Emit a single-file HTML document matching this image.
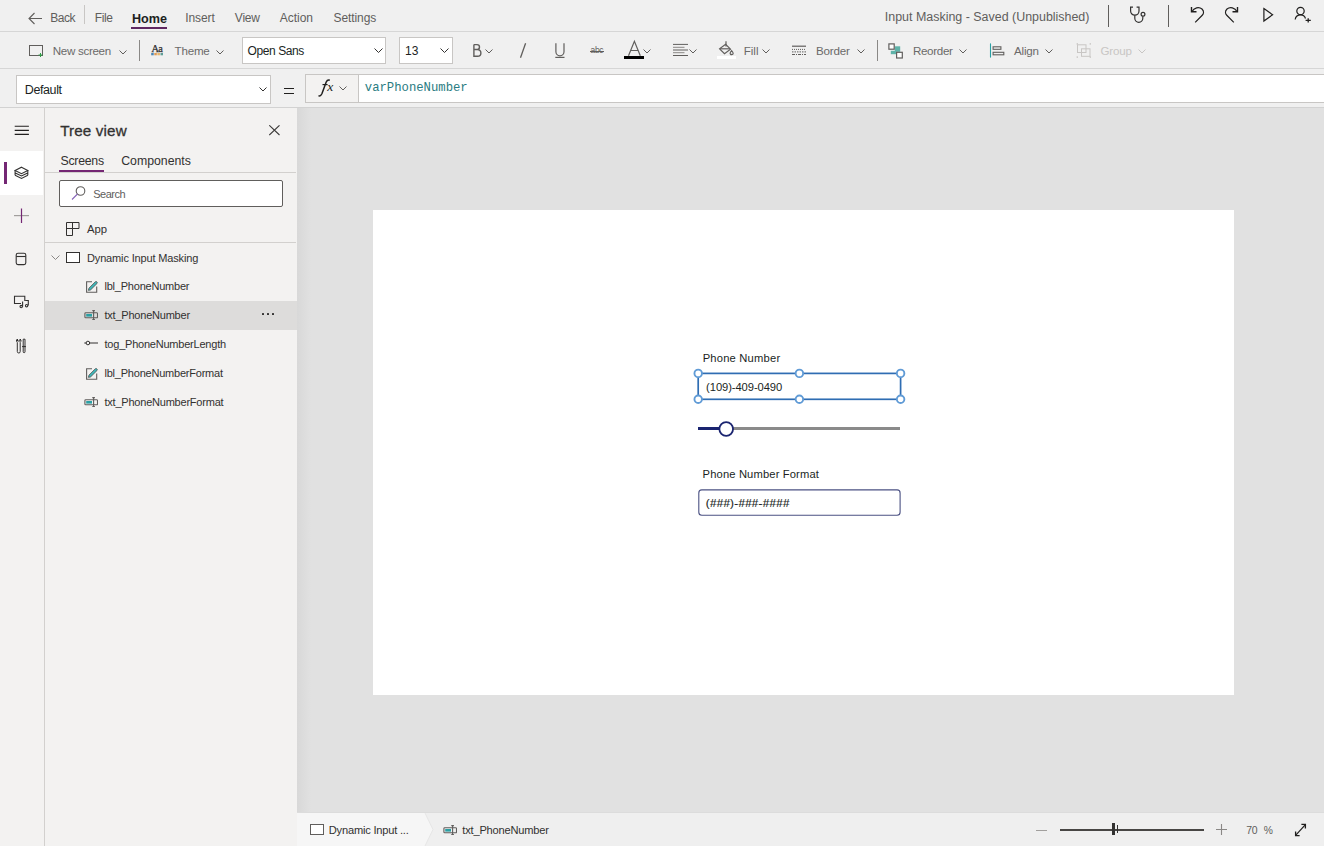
<!DOCTYPE html>
<html><head><meta charset="utf-8"><style>
html,body{margin:0;padding:0;width:1324px;height:846px;overflow:hidden;position:relative;font-family:"Liberation Sans",sans-serif}
.t{position:absolute;white-space:nowrap;line-height:1.117;}
</style></head><body>
<div style="position:absolute;left:0px;top:0px;width:1324px;height:846px;background:#f3f2f1"></div>
<div style="position:absolute;left:0px;top:0px;width:1324px;height:107px;background:#f0f0f0"></div>
<div style="position:absolute;left:0px;top:31px;width:1324px;height:1px;background:#d6d6d6"></div>
<div style="position:absolute;left:0px;top:68px;width:1324px;height:1px;background:#d6d6d6"></div>
<div style="position:absolute;left:0px;top:107px;width:1324px;height:1px;background:#d2d2d2"></div>
<div style="position:absolute;left:44px;top:108px;width:1px;height:738px;background:#d2d0ce"></div>
<div style="position:absolute;left:297px;top:108px;width:1027px;height:704px;background:#e1e1e1"></div>
<div style="position:absolute;left:297px;top:108px;width:14px;height:704px;background:linear-gradient(to right,#d8d8d8,#e1e1e1)"></div>
<div style="position:absolute;left:297px;top:812px;width:1027px;height:34px;background:#efefef"></div>
<div style="position:absolute;left:297px;top:812px;width:1027px;height:1px;background:#dcdcdc"></div>
<svg style="position:absolute;left:28px;top:12px" width="15" height="13" viewBox="0 0 15 13" fill="none"><path d="M1 6.5 H14 M6.5 1 L1 6.5 L6.5 12" stroke="#605e5c" stroke-width="1.1"/></svg>
<div class="t" style="left:50.3px;top:12.34px;font-size:12px;color:#605e5c;font-weight:400;font-family:'Liberation Sans';letter-spacing:-0.45px;">Back</div>
<div style="position:absolute;left:84px;top:5px;width:1px;height:19px;background:#c8c6c4"></div>
<div class="t" style="left:94.8px;top:12.34px;font-size:12px;color:#605e5c;font-weight:400;font-family:'Liberation Sans';letter-spacing:-0.4px;">File</div>
<div class="t" style="left:132px;top:12.20px;font-size:12.6px;color:#201f1e;font-weight:700;font-family:'Liberation Sans';letter-spacing:0px;">Home</div>
<div style="position:absolute;left:131px;top:27px;width:36px;height:2px;background:#5e2760"></div>
<div class="t" style="left:185.3px;top:12.34px;font-size:12px;color:#605e5c;font-weight:400;font-family:'Liberation Sans';letter-spacing:-0.1px;">Insert</div>
<div class="t" style="left:234.8px;top:12.34px;font-size:12px;color:#605e5c;font-weight:400;font-family:'Liberation Sans';letter-spacing:-0.2px;">View</div>
<div class="t" style="left:279.7px;top:12.34px;font-size:12px;color:#605e5c;font-weight:400;font-family:'Liberation Sans';letter-spacing:0px;">Action</div>
<div class="t" style="left:333.6px;top:12.34px;font-size:12px;color:#605e5c;font-weight:400;font-family:'Liberation Sans';letter-spacing:-0.1px;">Settings</div>
<div class="t" style="left:884.8px;top:10.73px;font-size:12.45px;color:#605e5c;font-weight:400;font-family:'Liberation Sans';letter-spacing:0px;">Input Masking - Saved (Unpublished)</div>
<div style="position:absolute;left:1108px;top:5px;width:1px;height:22px;background:#605e5c"></div>
<div style="position:absolute;left:1168px;top:5px;width:1px;height:22px;background:#605e5c"></div>
<svg style="position:absolute;left:1125px;top:4px" width="25" height="22" viewBox="0 0 25 22" fill="none"><path d="M8 3.2 H5.6 V7 a4.2 4.2 0 0 0 8.4 0 V3.2 H11.6" stroke="#323130" stroke-width="1.2"/><path d="M9.8 11.2 V14.3 a4 4 0 0 0 8 0 V12.2" stroke="#323130" stroke-width="1.2"/><circle cx="18" cy="10.2" r="1.9" stroke="#323130" stroke-width="1.2"/></svg>
<svg style="position:absolute;left:1186px;top:4px" width="22" height="22" viewBox="0 0 22 22" fill="none"><path d="M5.5 3 V7.7 H10.5" stroke="#201f1e" stroke-width="1.4"/><path d="M6 7.5 C8 3.5 13 2.5 16 5 C18.5 7.5 17.5 10 16 11.5 L9.2 18.3" stroke="#201f1e" stroke-width="1.2"/></svg>
<svg style="position:absolute;left:1221px;top:4px" width="22" height="22" viewBox="0 0 22 22" fill="none"><g transform="translate(22,0) scale(-1,1)"><path d="M5.5 3 V7.7 H10.5" stroke="#201f1e" stroke-width="1.4"/><path d="M6 7.5 C8 3.5 13 2.5 16 5 C18.5 7.5 17.5 10 16 11.5 L9.2 18.3" stroke="#201f1e" stroke-width="1.2"/></g></svg>
<svg style="position:absolute;left:1258px;top:4px" width="22" height="22" viewBox="0 0 22 22" fill="none"><path d="M5.9 4.6 L14.6 10.7 L5.9 17 Z" stroke="#201f1e" stroke-width="1.2" stroke-linejoin="miter"/></svg>
<svg style="position:absolute;left:1290px;top:4px" width="24" height="22" viewBox="0 0 24 22" fill="none"><circle cx="10.5" cy="7" r="3.7" stroke="#201f1e" stroke-width="1.2"/><path d="M5.2 15.5 a5.3 5.3 0 0 1 10.3 -1" stroke="#201f1e" stroke-width="1.2"/><path d="M18.2 14.3 V18.6 M15.6 16.4 H20.8" stroke="#201f1e" stroke-width="1.3"/></svg>
<svg style="position:absolute;left:29px;top:45px" width="15" height="12" viewBox="0 0 15 12" fill="none"><rect x="0.5" y="0.5" width="13" height="10" stroke="#605e5c" stroke-width="1"/><path d="M11.5 8 V12 M9.5 10 H13.5" stroke="#2e9e47" stroke-width="1"/></svg>
<div class="t" style="left:52.7px;top:44.50px;font-size:11.6px;color:#6b6a69;font-weight:400;font-family:'Liberation Sans';letter-spacing:-0.3px;">New screen</div>
<svg style="position:absolute;left:118.5px;top:49.5px" width="8" height="5" viewBox="0 0 8 5" fill="none"><path d="M0.5 0.5 L4.0 4.0 L7.5 0.5" stroke="#605e5c" stroke-width="1"/></svg>
<div style="position:absolute;left:139px;top:40px;width:1px;height:21px;background:#8a8886"></div>
<div class="t" style="left:151.4px;top:42.58px;font-size:10.3px;color:#323130;font-weight:400;font-family:'Liberation Serif';letter-spacing:-0.5px;-webkit-text-stroke:0.25px #323130">Aa</div>
<svg style="position:absolute;left:151px;top:53.4px" width="13" height="3" viewBox="0 0 13 3" fill="none"><rect x="0.2" y="0" width="2.5" height="2.3" fill="#4a86b5"/><rect x="3.3" y="0" width="2.5" height="2.3" fill="#e09a55"/><rect x="6.4" y="0" width="2.5" height="2.3" fill="#e8b56a"/><rect x="9.5" y="0" width="2.5" height="2.3" fill="#5f9e96"/></svg>
<div class="t" style="left:174.5px;top:44.50px;font-size:11.6px;color:#6b6a69;font-weight:400;font-family:'Liberation Sans';letter-spacing:-0.2px;">Theme</div>
<svg style="position:absolute;left:215.5px;top:49.5px" width="8" height="5" viewBox="0 0 8 5" fill="none"><path d="M0.5 0.5 L4.0 4.0 L7.5 0.5" stroke="#605e5c" stroke-width="1"/></svg>
<div style="position:absolute;left:242px;top:37px;width:144px;height:27px;background:#fff;border:1px solid #c8c6c4;box-sizing:border-box"></div>
<div class="t" style="left:247.5px;top:45.14px;font-size:12px;color:#201f1e;font-weight:400;font-family:'Liberation Sans';letter-spacing:-0.4px;">Open Sans</div>
<svg style="position:absolute;left:374px;top:48px" width="9" height="5" viewBox="0 0 9 5" fill="none"><path d="M0.5 0.5 L4.5 4.5 L8.5 0.5" stroke="#323130" stroke-width="1"/></svg>
<div style="position:absolute;left:399px;top:37px;width:54px;height:27px;background:#fff;border:1px solid #c8c6c4;box-sizing:border-box"></div>
<div class="t" style="left:405px;top:45.14px;font-size:12px;color:#201f1e;font-weight:400;font-family:'Liberation Sans';letter-spacing:0px;">13</div>
<svg style="position:absolute;left:440px;top:48px" width="9" height="5" viewBox="0 0 9 5" fill="none"><path d="M0.5 0.5 L4.5 4.5 L8.5 0.5" stroke="#323130" stroke-width="1"/></svg>
<svg style="position:absolute;left:468px;top:38px" width="30" height="22" viewBox="0 0 30 22" fill="none"><path d="M5.9 6.6 V18.3 H9.5 a3.4 3.4 0 0 0 0 -6.8 H5.9 M5.9 11.6 H9 a2.5 2.5 0 0 0 0 -5 H5.9" stroke="#605e5c" stroke-width="1.4"/></svg>
<svg style="position:absolute;left:484.5px;top:49px" width="8" height="5" viewBox="0 0 8 5" fill="none"><path d="M0.5 0.5 L4.0 4.0 L7.5 0.5" stroke="#605e5c" stroke-width="1"/></svg>
<svg style="position:absolute;left:515px;top:38px" width="15" height="22" viewBox="0 0 15 22" fill="none"><path d="M10.6 5.2 L5.5 19.7" stroke="#605e5c" stroke-width="1.3"/></svg>
<svg style="position:absolute;left:550px;top:38px" width="20" height="22" viewBox="0 0 20 22" fill="none"><path d="M5.9 5.2 V13.8 a4.05 4.05 0 0 0 8.1 0 V5.2" stroke="#605e5c" stroke-width="1.2"/><path d="M5.3 19.4 H14.5" stroke="#605e5c" stroke-width="1.2"/></svg>
<div class="t" style="left:590.5px;top:45.81px;font-size:8.5px;color:#605e5c;font-weight:400;font-family:'Liberation Sans';letter-spacing:-0.3px;">abc</div>
<div style="position:absolute;left:590px;top:50.5px;width:14px;height:1px;background:#605e5c"></div>
<svg style="position:absolute;left:618px;top:36px" width="30" height="24" viewBox="0 0 30 24" fill="none"><path d="M10.5 19.8 L16.4 5.3 L22.3 19.8 M12.4 14.5 H20.4" stroke="#605e5c" stroke-width="1.2"/></svg>
<div style="position:absolute;left:624px;top:56px;width:20px;height:3px;background:#000"></div>
<svg style="position:absolute;left:642.5px;top:49px" width="8" height="5" viewBox="0 0 8 5" fill="none"><path d="M0.5 0.5 L4.0 4.0 L7.5 0.5" stroke="#605e5c" stroke-width="1"/></svg>
<svg style="position:absolute;left:673px;top:43px" width="16" height="14" viewBox="0 0 16 14" fill="none"><path d="M0 1.4 H15 M0 7 H15 M0 12.5 H15" stroke="#605e5c" stroke-width="1"/><path d="M0 4.3 H11.5 M0 9.7 H11.5" stroke="#8a8886" stroke-width="1"/></svg>
<svg style="position:absolute;left:689px;top:49.3px" width="8" height="5" viewBox="0 0 8 5" fill="none"><path d="M0.5 0.5 L4.0 4.0 L7.5 0.5" stroke="#605e5c" stroke-width="1"/></svg>
<svg style="position:absolute;left:716px;top:38px" width="22" height="18" viewBox="0 0 22 18" fill="none"><path d="M10 3.3 V8.5" stroke="#605e5c" stroke-width="1.2"/><path d="M3.6 10.8 L8.5 15.7 L14.5 11.2 L9.6 6.3 Z" stroke="#605e5c" stroke-width="1.2"/><path d="M4 10.8 H14" stroke="#605e5c" stroke-width="1.2"/><path d="M15.6 12.6 Q17.7 15 17 16 Q15.6 17.3 14.3 16 Q13.5 15 15.6 12.6Z" stroke="#605e5c" stroke-width="1.1"/></svg>
<div style="position:absolute;left:717px;top:56px;width:19px;height:3px;background:#fff"></div>
<div class="t" style="left:743.7px;top:44.50px;font-size:11.6px;color:#6b6a69;font-weight:400;font-family:'Liberation Sans';letter-spacing:0px;">Fill</div>
<svg style="position:absolute;left:761.5px;top:49.2px" width="8" height="5" viewBox="0 0 8 5" fill="none"><path d="M0.5 0.5 L4.0 4.0 L7.5 0.5" stroke="#605e5c" stroke-width="1"/></svg>
<svg style="position:absolute;left:792px;top:44px" width="14" height="12" viewBox="0 0 14 12" fill="none"><path d="M0 2.2 H14" stroke="#605e5c" stroke-width="1.2"/><path d="M0 5.4 H14" stroke="#605e5c" stroke-width="1" stroke-dasharray="1 1"/><path d="M0 7.9 H14" stroke="#605e5c" stroke-width="1" stroke-dasharray="1.5 1"/><path d="M0 10.5 H14" stroke="#605e5c" stroke-width="1.2" stroke-dasharray="3 1 1 1"/></svg>
<div class="t" style="left:816px;top:44.50px;font-size:11.6px;color:#6b6a69;font-weight:400;font-family:'Liberation Sans';letter-spacing:-0.2px;">Border</div>
<svg style="position:absolute;left:857px;top:49.2px" width="8" height="5" viewBox="0 0 8 5" fill="none"><path d="M0.5 0.5 L4.0 4.0 L7.5 0.5" stroke="#605e5c" stroke-width="1"/></svg>
<div style="position:absolute;left:877px;top:40px;width:1px;height:21px;background:#8a8886"></div>
<svg style="position:absolute;left:882px;top:38px" width="24" height="22" viewBox="0 0 24 22" fill="none"><rect x="12.8" y="8.3" width="5.4" height="5.5" fill="#5fb3a9"/><rect x="8.8" y="12.8" width="5.4" height="3.4" fill="#5fb3a9"/><rect x="6.9" y="5.9" width="5.3" height="5.3" fill="#fff" stroke="#605e5c" stroke-width="1.2"/><rect x="14.6" y="14.3" width="5.7" height="5.7" fill="#fff" stroke="#605e5c" stroke-width="1.2"/></svg>
<div class="t" style="left:912.9px;top:44.50px;font-size:11.6px;color:#6b6a69;font-weight:400;font-family:'Liberation Sans';letter-spacing:-0.3px;">Reorder</div>
<svg style="position:absolute;left:958.5px;top:49.2px" width="8" height="5" viewBox="0 0 8 5" fill="none"><path d="M0.5 0.5 L4.0 4.0 L7.5 0.5" stroke="#605e5c" stroke-width="1"/></svg>
<svg style="position:absolute;left:988px;top:42px" width="18" height="18" viewBox="0 0 18 18" fill="none"><path d="M2.5 1.4 V15.6" stroke="#2aa0a4" stroke-width="1.1"/><rect x="5.1" y="4.8" width="7.8" height="2.5" stroke="#605e5c" stroke-width="1.1"/><rect x="5.1" y="10.3" width="10.7" height="2.5" stroke="#605e5c" stroke-width="1.1"/></svg>
<div class="t" style="left:1014px;top:44.50px;font-size:11.6px;color:#6b6a69;font-weight:400;font-family:'Liberation Sans';letter-spacing:-0.2px;">Align</div>
<svg style="position:absolute;left:1045px;top:49.2px" width="8" height="5" viewBox="0 0 8 5" fill="none"><path d="M0.5 0.5 L4.0 4.0 L7.5 0.5" stroke="#605e5c" stroke-width="1"/></svg>
<svg style="position:absolute;left:1074px;top:42px" width="20" height="18" viewBox="0 0 20 18" fill="none"><rect x="2.6" y="1.2" width="1.4" height="1.4" fill="#c8c6c4"/><rect x="15.6" y="1.2" width="1.4" height="1.4" fill="#c8c6c4"/><rect x="2.6" y="14.4" width="1.4" height="1.4" fill="#c8c6c4"/><rect x="15.6" y="14.4" width="1.4" height="1.4" fill="#c8c6c4"/><rect x="3.5" y="2.8" width="8.5" height="7.7" stroke="#c8c6c4" stroke-width="1"/><rect x="7.5" y="6.8" width="8.5" height="7.5" stroke="#c8c6c4" stroke-width="1"/></svg>
<div class="t" style="left:1100.5px;top:44.50px;font-size:11.6px;color:#c8c6c4;font-weight:400;font-family:'Liberation Sans';letter-spacing:-0.2px;">Group</div>
<svg style="position:absolute;left:1138px;top:49.2px" width="8" height="5" viewBox="0 0 8 5" fill="none"><path d="M0.5 0.5 L4.0 4.0 L7.5 0.5" stroke="#c8c6c4" stroke-width="1"/></svg>
<div style="position:absolute;left:16px;top:75px;width:255px;height:29px;background:#fff;border:1px solid #c8c6c4;box-sizing:border-box"></div>
<div class="t" style="left:24.8px;top:83.79px;font-size:12.5px;color:#201f1e;font-weight:400;font-family:'Liberation Sans';letter-spacing:-0.4px;">Default</div>
<svg style="position:absolute;left:259px;top:86.5px" width="8" height="5" viewBox="0 0 8 5" fill="none"><path d="M0.5 0.5 L4.0 4.0 L7.5 0.5" stroke="#323130" stroke-width="1"/></svg>
<div style="position:absolute;left:284px;top:88px;width:10px;height:1.3px;background:#201f1e"></div>
<div style="position:absolute;left:284px;top:93px;width:10px;height:1.3px;background:#201f1e"></div>
<div style="position:absolute;left:305px;top:74px;width:1028px;height:29px;background:#fff;border:1px solid #c8c6c4;box-sizing:border-box"></div>
<div style="position:absolute;left:306px;top:75px;width:53px;height:27px;background:#f3f2f1;border-right:1px solid #c8c6c4;box-sizing:border-box"></div>
<svg style="position:absolute;left:314px;top:76px" width="20" height="24" viewBox="0 0 20 24" fill="none"><path d="M4.5 19.6 Q6.5 20.8 8 17.5 L12.2 6 Q13.5 3.3 15.8 4.3" stroke="#201f1e" stroke-width="1.5"/><path d="M8.5 8.6 H13.6" stroke="#201f1e" stroke-width="1.2"/></svg>
<div class="t" style="left:327.3px;top:78.98px;font-size:13.5px;color:#201f1e;font-weight:400;font-family:'Liberation Serif';letter-spacing:0px;"><i>x</i></div>
<svg style="position:absolute;left:339px;top:86px" width="8" height="5" viewBox="0 0 8 5" fill="none"><path d="M0.5 0.5 L4.0 4.0 L7.5 0.5" stroke="#605e5c" stroke-width="1"/></svg>
<div class="t" style="left:364.8px;top:82.41px;font-size:12.25px;color:#2a7c82;font-weight:400;font-family:'Liberation Mono';letter-spacing:0px;">varPhoneNumber</div>
<svg style="position:absolute;left:14px;top:125px" width="15" height="10" viewBox="0 0 15 10" fill="none"><path d="M0.7 1.3 H14.9 M0.7 5.4 H14.9 M0.7 9.4 H14.9" stroke="#201f1e" stroke-width="1.1"/></svg>
<div style="position:absolute;left:0px;top:151px;width:43px;height:44px;background:#fff"></div>
<div style="position:absolute;left:4px;top:162px;width:3px;height:22px;background:#742774"></div>
<svg style="position:absolute;left:13px;top:165px" width="16" height="16" viewBox="0 0 16 16" fill="none"><path d="M8.5 2.2 L14.8 5.5 L8.5 8.7 L2.1 5.5 Z" stroke="#323130" stroke-width="1.1"/><path d="M2.3 7.9 L8.5 11 L14.6 7.9 M2.1 10.3 L8.5 13.5 L14.8 10.3 M2.1 5.5 V10.3 M14.8 5.5 V10.3" stroke="#323130" stroke-width="1.1"/></svg>
<svg style="position:absolute;left:14px;top:208px" width="16" height="16" viewBox="0 0 16 16" fill="none"><path d="M0 7.6 H15" stroke="#a19f9d" stroke-width="1.2"/><path d="M7.5 0.5 V15" stroke="#742774" stroke-width="1.2"/></svg>
<svg style="position:absolute;left:15px;top:252px" width="12" height="14" viewBox="0 0 12 14" fill="none"><rect x="1.2" y="1.2" width="9.6" height="11.4" rx="1.8" stroke="#323130" stroke-width="1.1"/><path d="M1.2 4.5 H10.8" stroke="#323130" stroke-width="1.1"/></svg>
<svg style="position:absolute;left:13px;top:294px" width="17" height="15" viewBox="0 0 17 15" fill="none"><path d="M8 9.5 H1.5 V2.3 H11.8 V7" stroke="#323130" stroke-width="1.1"/><circle cx="8.2" cy="12.6" r="1.2" stroke="#323130" stroke-width="1.1"/><circle cx="13.6" cy="11.7" r="1.2" stroke="#323130" stroke-width="1.1"/><path d="M9.6 12.4 V7.4 M12.2 6.5 H15.3 V11.5" stroke="#323130" stroke-width="1.1"/></svg>
<svg style="position:absolute;left:15px;top:337px" width="13" height="18" viewBox="0 0 13 18" fill="none"><path d="M3.8 16 a1.5 1.5 0 0 1 -1.5 -1.5 V5.5 Q1.2 4.5 1.5 3 L2.5 2 V4 H5 V2 L6 3 Q6.2 4.5 5.2 5.5 V14.5 a1.4 1.4 0 0 1 -1.4 1.5Z" stroke="#323130" stroke-width="1"/><path d="M8.2 2.2 H10 V9.4 H8.2 Z M7 9.6 H11 M8.2 9.6 V14.8 a0.9 0.9 0 0 0 1.8 0 V9.6" stroke="#323130" stroke-width="1"/></svg>
<div class="t" style="left:60.2px;top:122.94px;font-size:15.2px;color:#323130;font-weight:400;font-family:'Liberation Sans';letter-spacing:0.15px;-webkit-text-stroke:0.3px #323130">Tree view</div>
<svg style="position:absolute;left:269px;top:125px" width="11" height="11" viewBox="0 0 11 11" fill="none"><path d="M0.3 0.3 L10.5 10 M10.5 0.3 L0.3 10" stroke="#3b3a39" stroke-width="1.05"/></svg>
<div class="t" style="left:60.5px;top:155.07px;font-size:12.3px;color:#323130;font-weight:400;font-family:'Liberation Sans';letter-spacing:-0.25px;">Screens</div>
<div style="position:absolute;left:59px;top:170px;width:45px;height:2px;background:#742774"></div>
<div class="t" style="left:121.2px;top:155.07px;font-size:12.3px;color:#323130;font-weight:400;font-family:'Liberation Sans';letter-spacing:0px;">Components</div>
<div style="position:absolute;left:45px;top:172px;width:251px;height:1px;background:#d2d0ce"></div>
<div style="position:absolute;left:59px;top:180px;width:224px;height:27px;background:#fff;border:1px solid #605e5c;border-radius:2px;box-sizing:border-box"></div>
<svg style="position:absolute;left:71px;top:186px" width="15" height="14" viewBox="0 0 15 14" fill="none"><circle cx="9.5" cy="5" r="4.3" stroke="#605e5c" stroke-width="1.1"/><path d="M6.5 8 L1 13.5" stroke="#8764b8" stroke-width="1.1"/></svg>
<div class="t" style="left:93.2px;top:188.04px;font-size:11px;color:#605e5c;font-weight:400;font-family:'Liberation Sans';letter-spacing:-0.5px;">Search</div>
<svg style="position:absolute;left:65.7px;top:221.8px" width="14" height="14" viewBox="0 0 14 14" fill="none"><path d="M0.5 0.5 H13 V6.5 H6.5 V13.5 H0.5 Z M0.5 6.5 H6.5 M6.5 0.5 V6.5" stroke="#323130"/></svg>
<div class="t" style="left:87px;top:222.57px;font-size:11.3px;color:#323130;font-weight:400;font-family:'Liberation Sans';letter-spacing:0px;">App</div>
<div style="position:absolute;left:45px;top:242px;width:251px;height:1px;background:#d2d0ce"></div>
<svg style="position:absolute;left:51px;top:255px" width="9" height="5" viewBox="0 0 9 5" fill="none"><path d="M0.5 0.5 L4.5 4.5 L8.5 0.5" stroke="#8a8886" stroke-width="1"/></svg>
<div style="position:absolute;left:66px;top:252px;width:14px;height:11px;border:1px solid #323130;box-sizing:border-box;background:#fff"></div>
<div class="t" style="left:87px;top:251.84px;font-size:11px;color:#323130;font-weight:400;font-family:'Liberation Sans';letter-spacing:-0.15px;">Dynamic Input Masking</div>
<div style="position:absolute;left:45px;top:301px;width:252px;height:29px;background:#dddcdb"></div>
<div class="t" style="left:104.5px;top:279.75px;font-size:11px;color:#323130;font-weight:400;font-family:'Liberation Sans';letter-spacing:-0.22px;">lbl_PhoneNumber</div>
<svg style="position:absolute;left:85px;top:280.2px" width="13" height="13" viewBox="0 0 13 13" fill="none"><path d="M7 1.7 H1.6 V12.2 H11.7 V6.5" stroke="#605e5c" stroke-width="1.1"/><path d="M3.4 10.4 L3.9 8.2 L10.3 1.8 Q11.1 1.1 11.8 1.8 L12 2 Q12.7 2.7 12 3.5 L5.6 9.9 Z" fill="#3fb6b8" stroke="#505050" stroke-width="0.8"/></svg>
<div class="t" style="left:104.5px;top:308.75px;font-size:11px;color:#323130;font-weight:400;font-family:'Liberation Sans';letter-spacing:-0.22px;">txt_PhoneNumber</div>
<svg style="position:absolute;left:84px;top:310px" width="14" height="10" viewBox="0 0 14 10" fill="none"><rect x="0.9" y="2.8" width="12.6" height="5" rx="0.8" stroke="#605e5c" stroke-width="1.1"/><rect x="2.2" y="4" width="5.8" height="2.6" fill="#2aa0a4"/><path d="M8.3 0.6 H10.9 M9.6 0.6 V9.6 M8.3 9.6 H10.9" stroke="#605e5c" stroke-width="1.1"/></svg>
<div class="t" style="left:104.5px;top:337.75px;font-size:11px;color:#323130;font-weight:400;font-family:'Liberation Sans';letter-spacing:-0.22px;">tog_PhoneNumberLength</div>
<svg style="position:absolute;left:84px;top:340.4px" width="15" height="6" viewBox="0 0 15 6" fill="none"><path d="M0.3 3 H2.1 M5.7 3 H14" stroke="#323130" stroke-width="1"/><circle cx="3.9" cy="3" r="1.8" stroke="#323130" stroke-width="1"/></svg>
<div class="t" style="left:104.5px;top:366.75px;font-size:11px;color:#323130;font-weight:400;font-family:'Liberation Sans';letter-spacing:-0.22px;">lbl_PhoneNumberFormat</div>
<svg style="position:absolute;left:85px;top:367.2px" width="13" height="13" viewBox="0 0 13 13" fill="none"><path d="M7 1.7 H1.6 V12.2 H11.7 V6.5" stroke="#605e5c" stroke-width="1.1"/><path d="M3.4 10.4 L3.9 8.2 L10.3 1.8 Q11.1 1.1 11.8 1.8 L12 2 Q12.7 2.7 12 3.5 L5.6 9.9 Z" fill="#3fb6b8" stroke="#505050" stroke-width="0.8"/></svg>
<div class="t" style="left:104.5px;top:395.75px;font-size:11px;color:#323130;font-weight:400;font-family:'Liberation Sans';letter-spacing:-0.22px;">txt_PhoneNumberFormat</div>
<svg style="position:absolute;left:84px;top:397px" width="14" height="10" viewBox="0 0 14 10" fill="none"><rect x="0.9" y="2.8" width="12.6" height="5" rx="0.8" stroke="#605e5c" stroke-width="1.1"/><rect x="2.2" y="4" width="5.8" height="2.6" fill="#2aa0a4"/><path d="M8.3 0.6 H10.9 M9.6 0.6 V9.6 M8.3 9.6 H10.9" stroke="#605e5c" stroke-width="1.1"/></svg>
<div style="position:absolute;left:262px;top:313px;width:2px;height:2px;background:#323130;border-radius:0.5px"></div>
<div style="position:absolute;left:267px;top:313px;width:2px;height:2px;background:#323130;border-radius:0.5px"></div>
<div style="position:absolute;left:272px;top:313px;width:2px;height:2px;background:#323130;border-radius:0.5px"></div>
<div style="position:absolute;left:373px;top:210px;width:861px;height:485px;background:#fff"></div>
<div class="t" style="left:702.7px;top:351.86px;font-size:11.2px;color:#201f1e;font-weight:400;font-family:'Liberation Sans';letter-spacing:0.2px;">Phone Number</div>
<svg style="position:absolute;left:690px;top:365px" width="220" height="45" viewBox="0 0 220 45" fill="none"><rect x="8.2" y="8.4" width="202.4" height="25.9" stroke="#2f6db3" stroke-width="1.7"/><circle cx="8.200000000000045" cy="8.399999999999977" r="3.75" fill="#fff" stroke="#609bd6" stroke-width="1.9"/><circle cx="8.200000000000045" cy="34.30000000000001" r="3.75" fill="#fff" stroke="#609bd6" stroke-width="1.9"/><circle cx="109.39999999999998" cy="8.399999999999977" r="3.75" fill="#fff" stroke="#609bd6" stroke-width="1.9"/><circle cx="109.39999999999998" cy="34.30000000000001" r="3.75" fill="#fff" stroke="#609bd6" stroke-width="1.9"/><circle cx="210.60000000000002" cy="8.399999999999977" r="3.75" fill="#fff" stroke="#609bd6" stroke-width="1.9"/><circle cx="210.60000000000002" cy="34.30000000000001" r="3.75" fill="#fff" stroke="#609bd6" stroke-width="1.9"/></svg>
<div class="t" style="left:706.1px;top:380.66px;font-size:11.2px;color:#201f1e;font-weight:400;font-family:'Liberation Sans';letter-spacing:-0.08px;">(109)-409-0490</div>
<div style="position:absolute;left:698px;top:427.3px;width:22px;height:2.7px;background:#1a2470"></div>
<div style="position:absolute;left:733px;top:427.3px;width:167px;height:2.7px;background:#8a8a8a"></div>
<svg style="position:absolute;left:710px;top:413px" width="32" height="32" viewBox="0 0 32 32" fill="none"><circle cx="16.2" cy="16" r="6.85" fill="#fff" stroke="#1a2470" stroke-width="1.8"/></svg>
<div class="t" style="left:702.6px;top:467.76px;font-size:11.2px;color:#201f1e;font-weight:400;font-family:'Liberation Sans';letter-spacing:0.14px;">Phone Number Format</div>
<svg style="position:absolute;left:690px;top:480px" width="220" height="45" viewBox="0 0 220 45" fill="none"><rect x="8.8" y="9.9" width="201.3" height="25.4" rx="3" stroke="#4b5183" stroke-width="1.1"/></svg>
<div class="t" style="left:705.8px;top:496.70px;font-size:11.6px;color:#201f1e;font-weight:400;font-family:'Liberation Sans';letter-spacing:0.28px;-webkit-text-stroke:0.15px #201f1e">(###)-###-####</div>
<svg style="position:absolute;left:297px;top:813px" width="140" height="33"><path d="M0 0 H128 L136 16.5 L128 33 H0 Z" fill="#f6f6f6"/><path d="M128 0 L136 16.5 L128 33" stroke="#e6e6e6" fill="none"/></svg>
<div style="position:absolute;left:310px;top:824px;width:14px;height:11px;border:1px solid #605e5c;box-sizing:border-box;background:#fff"></div>
<div class="t" style="left:328.8px;top:823.95px;font-size:11.1px;color:#323130;font-weight:400;font-family:'Liberation Sans';letter-spacing:-0.2px;">Dynamic Input ...</div>
<svg style="position:absolute;left:443px;top:825px" width="14" height="10" viewBox="0 0 14 10" fill="none"><rect x="0.9" y="2.8" width="12.6" height="5" rx="0.8" stroke="#605e5c" stroke-width="1.1"/><rect x="2.2" y="4" width="5.8" height="2.6" fill="#2aa0a4"/><path d="M8.3 0.6 H10.9 M9.6 0.6 V9.6 M8.3 9.6 H10.9" stroke="#605e5c" stroke-width="1.1"/></svg>
<div class="t" style="left:462.3px;top:823.95px;font-size:11.1px;color:#323130;font-weight:400;font-family:'Liberation Sans';letter-spacing:-0.2px;">txt_PhoneNumber</div>
<div style="position:absolute;left:1036px;top:829.5px;width:11px;height:1.2px;background:#a19f9d"></div>
<div style="position:absolute;left:1060px;top:828.7px;width:144px;height:2.2px;background:#484644"></div>
<div style="position:absolute;left:1112px;top:823px;width:2.5px;height:12px;background:#323130"></div>
<div style="position:absolute;left:1116.5px;top:825px;width:1px;height:8px;background:#323130"></div>
<svg style="position:absolute;left:1216px;top:824px" width="11" height="11" viewBox="0 0 11 11" fill="none"><path d="M0 5.5 H11 M5.5 0 V11" stroke="#8a8886" stroke-width="1.1"/></svg>
<div class="t" style="left:1246.2px;top:824.80px;font-size:10.5px;color:#605e5c;font-weight:400;font-family:'Liberation Sans';letter-spacing:-0.3px;">70</div>
<div class="t" style="left:1263.8px;top:824.98px;font-size:10.3px;color:#605e5c;font-weight:400;font-family:'Liberation Sans';letter-spacing:-0.5px;">%</div>
<svg style="position:absolute;left:1293px;top:823px" width="15" height="14" viewBox="0 0 15 14" fill="none"><path d="M2.8 12.2 L12.2 1.8" stroke="#201f1e" stroke-width="1.2"/><path d="M2.6 8.6 V12.6 H6.6 M8.4 1.4 H12.4 V5.4" stroke="#201f1e" stroke-width="1.3"/></svg>
</body></html>
